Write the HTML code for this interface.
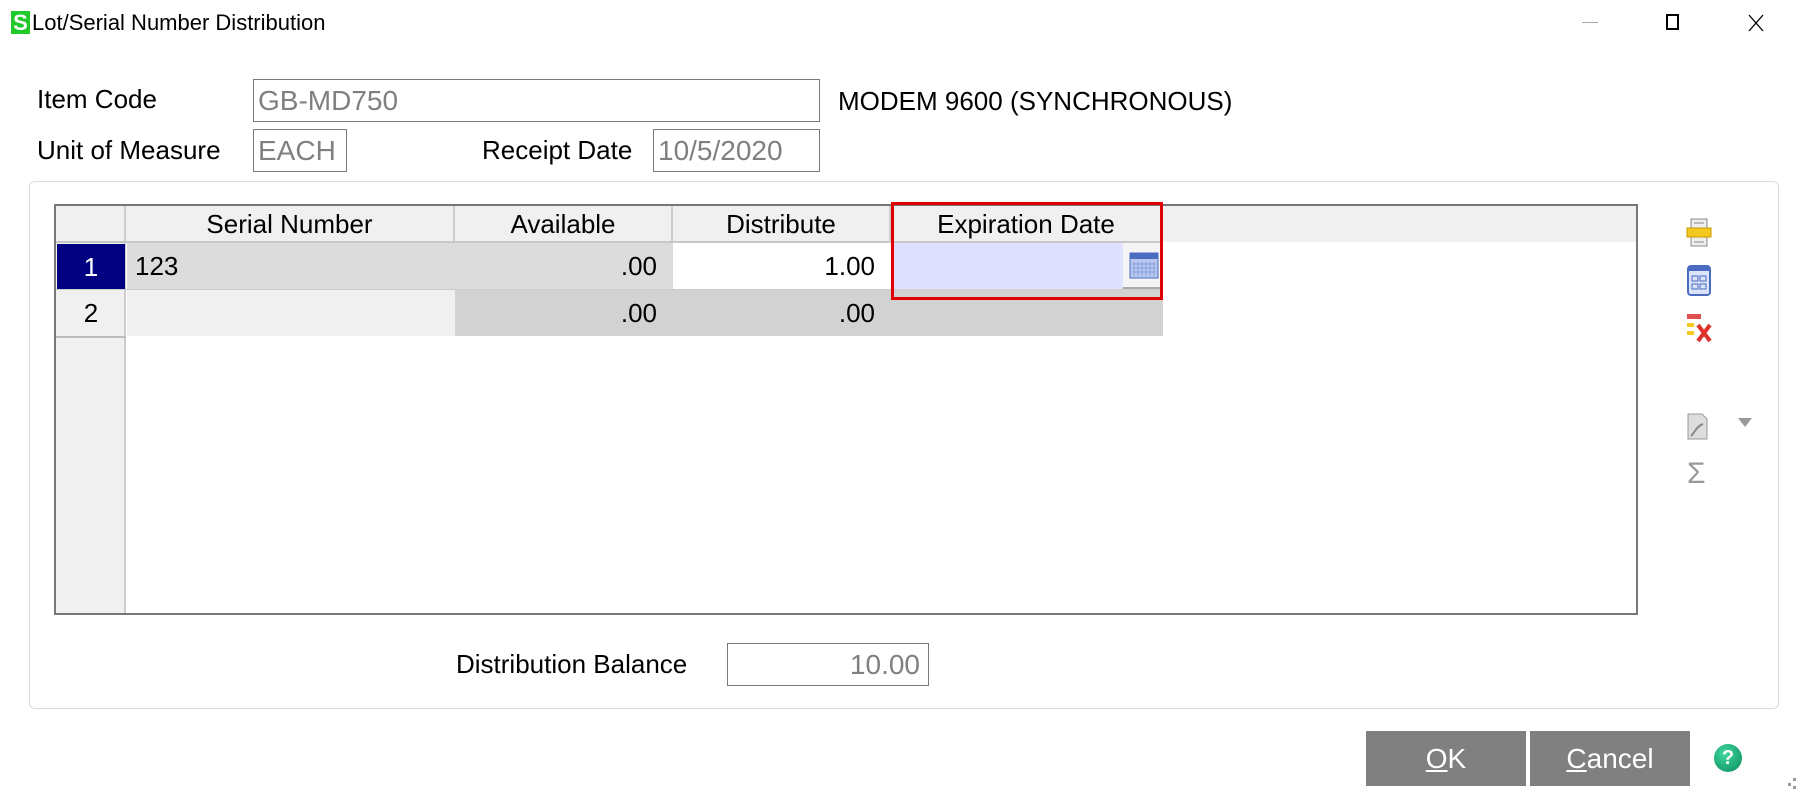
<!DOCTYPE html>
<html><head><meta charset="utf-8"><style>
*{margin:0;padding:0;box-sizing:border-box}
body{width:1800px;height:797px;background:#fff;position:relative;overflow:hidden;font-family:"Liberation Sans",Arial,sans-serif;color:#000}
.a{position:absolute}
.lbl{font-size:26px;line-height:30px;white-space:nowrap}
.box{position:absolute;border:1px solid #7a7a7a;background:#fff;color:#808080;font-size:28px;line-height:41px;padding-left:4px;white-space:nowrap;overflow:hidden}
.c{position:absolute;font-size:26px;line-height:30px;display:flex;align-items:center;white-space:nowrap}
.btn{position:absolute;background:#808080;color:#fff;font-size:28px;display:flex;align-items:center;justify-content:center}
</style></head><body>
<div class="a" style="left:11px;top:11px;width:19px;height:23px;background:#21c92a;color:#fff;font-weight:bold;font-size:22px;line-height:23px;text-align:center">S</div>
<div class="a" style="left:32px;top:10px;font-size:22px;line-height:26px">Lot/Serial Number Distribution</div>
<div class="a" style="left:1582px;top:22px;width:16px;height:1px;background:#aaa"></div>
<div class="a" style="left:1666px;top:14px;width:13px;height:16px;border:2px solid #000"></div>
<svg class="a" style="left:1748px;top:14px" width="16" height="18"><path d="M1 1L15 17M15 1L1 17" stroke="#000" stroke-width="1.3"/></svg>

<div class="a lbl" style="left:37px;top:84px">Item Code</div>
<div class="box" style="left:253px;top:79px;width:567px;height:43px">GB-MD750</div>
<div class="a lbl" style="left:838px;top:86px">MODEM 9600 (SYNCHRONOUS)</div>
<div class="a lbl" style="left:37px;top:135px">Unit of Measure</div>
<div class="box" style="left:253px;top:129px;width:94px;height:43px">EACH</div>
<div class="a lbl" style="left:482px;top:135px">Receipt Date</div>
<div class="box" style="left:653px;top:129px;width:167px;height:43px">10/5/2020</div>

<div class="a" style="left:29px;top:181px;width:1750px;height:528px;border:1px solid #dcdcdc;border-radius:6px"></div>

<div class="a" style="left:54px;top:204px;width:1584px;height:411px;border:2px solid #777;background:#fff"></div>
<div class="a" style="left:56px;top:206px;width:1580px;height:36px;background:#f0f0f0"></div>
<div class="a" style="left:56px;top:206px;width:70px;height:407px;background:#f0f0f0;border-right:2px solid #ccc"></div>
<div class="c" style="left:126px;top:206px;width:329px;height:36px;justify-content:center;border-right:2px solid #ccc">Serial Number</div>
<div class="c" style="left:455px;top:206px;width:218px;height:36px;justify-content:center;border-right:2px solid #ccc">Available</div>
<div class="c" style="left:673px;top:206px;width:218px;height:36px;justify-content:center;border-right:2px solid #ccc">Distribute</div>
<div class="c" style="left:891px;top:206px;width:272px;height:36px;justify-content:center;border-right:2px solid #ccc">Expiration Date</div>
<div class="a" style="left:56px;top:241px;width:1107px;height:2px;background:#c8c8c8"></div>
<!-- row1 -->
<div class="c" style="left:57px;top:244px;width:68px;height:45px;background:#000080;color:#fff;justify-content:center">1</div>
<div class="c" style="left:127px;top:243px;width:328px;height:46px;background:#dcdcdc;padding-left:8px">123</div>
<div class="c" style="left:455px;top:243px;width:218px;height:46px;background:#dcdcdc;justify-content:flex-end;padding-right:16px">.00</div>
<div class="c" style="left:673px;top:243px;width:218px;height:46px;background:#fff;justify-content:flex-end;padding-right:16px">1.00</div>
<div class="a" style="left:891px;top:243px;width:232px;height:46px;background:#e0e0ff"></div>
<div class="a" style="left:1123px;top:243px;width:40px;height:46px;background:#f4f4f4;border-bottom:2px solid #aaa"></div>
<svg class="a" style="left:1129px;top:250px" width="30" height="30" viewBox="0 0 30 30"><rect x="1" y="3" width="28" height="25" fill="#b8c8f0" stroke="#4a6cc0"/><rect x="1" y="3" width="28" height="6" fill="#4a6cc0"/><g stroke="#8aa0dc" stroke-width="1"><path d="M5 12v14M9 12v14M13 12v14M17 12v14M21 12v14M25 12v14M3 14h24M3 18h24M3 22h24"/></g></svg>
<!-- row2 -->
<div class="a" style="left:56px;top:289px;width:1107px;height:1px;background:#ccc"></div>
<div class="c" style="left:57px;top:290px;width:68px;height:46px;justify-content:center">2</div>
<div class="a" style="left:127px;top:290px;width:328px;height:46px;background:#f0f0f0"></div>
<div class="c" style="left:455px;top:290px;width:218px;height:46px;background:#d2d2d2;justify-content:flex-end;padding-right:16px">.00</div>
<div class="c" style="left:673px;top:290px;width:218px;height:46px;background:#d2d2d2;justify-content:flex-end;padding-right:16px">.00</div>
<div class="a" style="left:891px;top:290px;width:272px;height:46px;background:#d2d2d2"></div>
<div class="a" style="left:56px;top:336px;width:70px;height:2px;background:#bbb"></div>
<div class="a" style="left:891px;top:202px;width:272px;height:98px;border:3px solid #e00000"></div>

<!-- right icons -->
<svg class="a" style="left:1686px;top:218px" width="26" height="30"><rect x="5" y="1" width="16" height="27" fill="#eee" stroke="#888"/><rect x="1" y="10" width="24" height="9" fill="#f5c820" stroke="#c89a00"/><path d="M8 5h10M8 24h10" stroke="#888"/></svg>
<svg class="a" style="left:1687px;top:265px" width="24" height="32"><rect x="1" y="1" width="22" height="29" rx="3" fill="#dbe4fa" stroke="#4a6cc0" stroke-width="2"/><rect x="1" y="1" width="22" height="5" fill="#4a6cc0"/><rect x="5" y="11" width="6" height="5" fill="none" stroke="#4a6cc0"/><rect x="13" y="11" width="6" height="5" fill="none" stroke="#4a6cc0"/><rect x="5" y="19" width="6" height="5" fill="none" stroke="#4a6cc0"/><rect x="13" y="19" width="6" height="5" fill="none" stroke="#4a6cc0"/></svg>
<svg class="a" style="left:1686px;top:313px" width="28" height="32"><rect x="1" y="1" width="14" height="5" fill="#e05050"/><rect x="1" y="10" width="7" height="4" fill="#f5c820"/><rect x="1" y="18" width="7" height="4" fill="#f5c820"/><path d="M12 12l12 16M24 12l-12 16" stroke="#e03030" stroke-width="4"/></svg>
<svg class="a" style="left:1685px;top:412px" width="26" height="30"><path d="M3 2h14l5 5v20H3z" fill="#ddd" stroke="#999"/><path d="M6 24c4-4 6-10 12-12" stroke="#888" fill="none" stroke-width="2"/></svg>
<div class="a" style="left:1738px;top:418px;width:0;height:0;border-left:7px solid transparent;border-right:7px solid transparent;border-top:9px solid #999"></div>
<div class="a" style="left:1687px;top:459px;font-size:30px;line-height:30px;color:#999">Σ</div>

<div class="a lbl" style="left:456px;top:649px">Distribution Balance</div>
<div class="box" style="left:727px;top:643px;width:202px;height:43px;text-align:right;padding-right:8px">10.00</div>

<div class="btn" style="left:1366px;top:731px;width:160px;height:55px"><span><u>O</u>K</span></div>
<div class="btn" style="left:1530px;top:731px;width:160px;height:55px"><span><u>C</u>ancel</span></div>
<div class="a" style="left:1714px;top:744px;width:28px;height:28px;border-radius:50%;background:radial-gradient(circle at 40% 35%,#3fd8a0,#0a8a5a);color:#fff;font-weight:bold;font-size:20px;line-height:28px;text-align:center">?</div>
<div class="a" style="left:1788px;top:783px;width:3px;height:3px;background:#999"></div>
<div class="a" style="left:1793px;top:778px;width:3px;height:3px;background:#999"></div>
<div class="a" style="left:1793px;top:786px;width:3px;height:3px;background:#999"></div>
</body></html>
